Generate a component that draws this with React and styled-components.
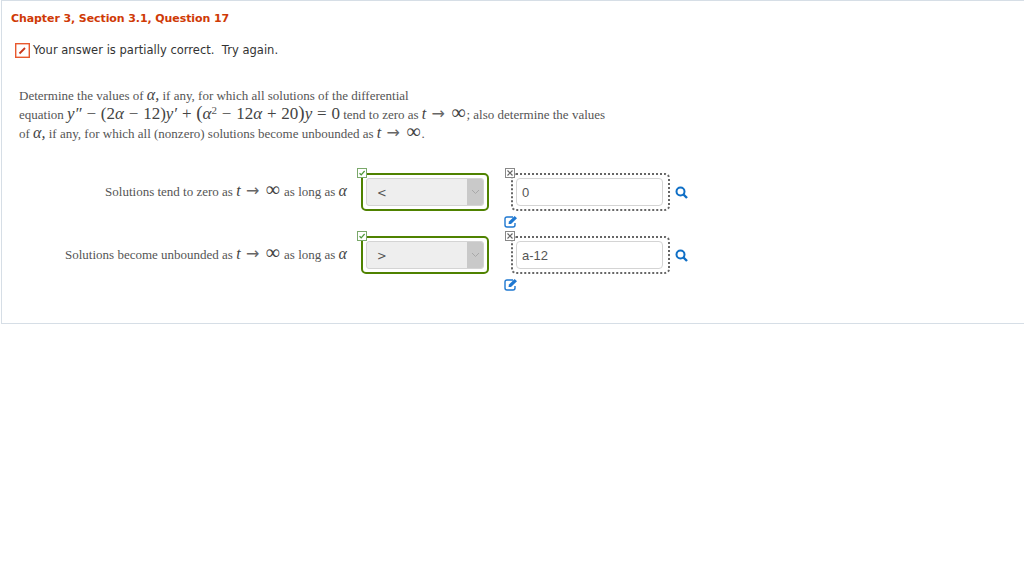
import React from 'react';
import styled, { createGlobalStyle } from 'styled-components';

const GlobalStyle = createGlobalStyle`
  html, body {
    margin: 0;
    padding: 0;
    background: #fff;
    overflow: hidden;
  }
`;

const Panel = styled.div`
  margin-left: 1px;
  height: 311px;
  border: 1px solid #d6dee6;
  border-right: none;
  box-shadow: 0 1px 0 #eef3f8;
  padding: 11px 0 0 9px;
  box-sizing: content-box;
`;

const Heading = styled.h2`
  margin: 0;
  font: bold 11px/14px "DejaVu Sans", Verdana, sans-serif;
  letter-spacing: -0.09px;
  color: #cf3a06;
`;

const Feedback = styled.div`
  display: flex;
  align-items: center;
  gap: 3px;
  margin: 16px 0 0 4px;
  font: 11.5px/16px "DejaVu Sans", Verdana, sans-serif;
  letter-spacing: 0.02px;
  color: #333;
  white-space: pre;
`;

const Question = styled.div`
  margin: 28px 0 0 8px;
  width: 600px;
  font: 13px "Liberation Serif", "Times New Roman", serif;
  color: #555;
  white-space: nowrap;
`;

const Line = styled.div`
  height: 19px;
  line-height: 19px;
`;

const MathVar = styled.span`
  font: italic ${p => p.$size || 16}px/0 "Liberation Serif", serif;
  color: #444;
`;

const MathText = styled.span`
  font: ${p => p.$size || 16}px/0 "Liberation Serif", serif;
  color: #444;
  margin: 0 ${p => p.$gap || 0}px;
`;

const ArrowGlyph = styled.span`
  font: 16px/0 "DejaVu Sans", sans-serif;
  color: #666;
  margin: 0 2px;
`;

const InfinityGlyph = styled.span`
  font: 20px/0 "Liberation Serif", serif;
  color: #444;
  margin: 0 1px;
`;

const Sup = styled.sup`
  font-size: 11px;
  line-height: 0;
`;

const Rows = styled.div`
  display: flex;
  flex-direction: column;
  gap: 25px;
  margin: 30px 0 0 -9px;
`;

const Row = styled.div`
  display: grid;
  grid-template-columns: 345px 143px 196px 18px;
  height: 38px;
  align-items: center;
`;

const Label = styled.div`
  text-align: right;
  font: 13px/16px "Liberation Serif", serif;
  color: #555;
  white-space: nowrap;
`;

const SelectBox = styled.div`
  position: relative;
  margin-left: 14px;
  width: 128px;
  height: 38px;
  box-sizing: border-box;
  border: 2px solid #4f8200;
  border-radius: 5px;
  padding: 3px;
`;

const Select = styled.div`
  display: flex;
  height: 28px;
  box-sizing: border-box;
  border: 1px solid #d4d4d4;
  border-radius: 3px;
  background: #eee;
  overflow: hidden;
`;

const SelectValue = styled.span`
  flex: 1;
  padding-left: 10px;
  font: 11.5px/28px "DejaVu Sans", sans-serif;
  color: #555;
`;

const SelectArrow = styled.span`
  display: flex;
  align-items: center;
  justify-content: center;
  width: 16px;
  background: #c9c9c9;
`;

const Flag = styled.span`
  position: absolute;
  left: ${p => p.$left}px;
  top: -7px;
  display: flex;
  align-items: center;
  justify-content: center;
  width: 10px;
  height: 10px;
  box-sizing: border-box;
  border: 1px solid ${p => p.$color};
  background: #fff;
`;

const InputCell = styled.div`
  margin-left: 21px;
`;

const DottedBox = styled.div`
  position: relative;
  width: 159px;
  height: 38px;
  box-sizing: border-box;
  border: 2px dotted #666;
  border-radius: 5px;
  padding: 3px 5px 3px 3px;
`;

const Input = styled.div`
  height: 28px;
  box-sizing: border-box;
  border: 1px solid #d4d4d4;
  border-radius: 4px;
  padding-left: 5px;
  background: #fff;
  font: 13px/27px "Liberation Sans", Arial, sans-serif;
  color: #555;
`;

const EditMark = styled.span`
  position: absolute;
  left: -9px;
  top: 40px;
  display: block;
  line-height: 0;
`;

const SearchMark = styled.span`
  display: block;
  line-height: 0;
  margin-left: -11px;
`;

const PartialIcon = () => (
  <svg width="15" height="15" viewBox="0 0 15 15">
    <rect x="0.7" y="0.7" width="13.6" height="13.6" fill="#fff" stroke="#e8592e" strokeWidth="1.4" />
    <path d="M4.5 10.5 L10 5" stroke="#c8371a" strokeWidth="1.8" />
  </svg>
);

const CheckIcon = () => (
  <svg width="8" height="8" viewBox="0 0 8 8">
    <path d="M1.5 4.2 L3.2 5.8 L6.6 2" fill="none" stroke="#4f9a3a" strokeWidth="1.2" />
  </svg>
);

const CrossIcon = () => (
  <svg width="8" height="8" viewBox="0 0 8 8">
    <path d="M1.5 1.5 L6.5 6.5 M6.5 1.5 L1.5 6.5" stroke="#666" strokeWidth="1.2" />
  </svg>
);

const ChevronIcon = () => (
  <svg width="9" height="6" viewBox="0 0 9 6">
    <path d="M1 1 L4.5 4.5 L8 1" fill="none" stroke="#a8a8a8" strokeWidth="1" />
  </svg>
);

const EditIcon = () => (
  <svg width="14" height="13" viewBox="0 0 14 13">
    <path d="M9 2 H3 Q1 2 1 4 V10 Q1 12 3 12 H9 Q11 12 11 10 V8" fill="none" stroke="#1f78d1" strokeWidth="1.4" />
    <path d="M4.5 9 L5 6.6 L10.6 1 L13 3.2 L7 9 Z" fill="#1f78d1" />
  </svg>
);

const SearchIcon = () => (
  <svg width="13" height="13" viewBox="0 0 13 13">
    <circle cx="5.5" cy="5.5" r="4" fill="none" stroke="#0f6fc6" strokeWidth="2" />
    <path d="M8.5 8.5 L12 12" stroke="#0f6fc6" strokeWidth="2.4" />
  </svg>
);

const TendsTo = () => (
  <>
    <MathVar>t</MathVar> <ArrowGlyph>→</ArrowGlyph> <InfinityGlyph>∞</InfinityGlyph>
  </>
);

const answers = [
  { prompt: 'Solutions tend to zero as', op: '<', value: '0' },
  { prompt: 'Solutions become unbounded as', op: '>', value: 'a-12' }
];

export default function App() {
  return (
    <>
      <GlobalStyle />
      <Panel>
        <Heading>Chapter 3, Section 3.1, Question 17</Heading>
        <Feedback>
          <PartialIcon />
          <span>Your answer is partially correct.  Try again.</span>
        </Feedback>
        <Question>
          <Line>
            Determine the values of <MathVar>α,</MathVar> if any, for which all solutions of the differential
          </Line>
          <Line>
            equation <MathVar $size={17}>y″</MathVar>
            <MathText $size={17} $gap={4.8}>−</MathText>
            <MathText $size={17}>(2</MathText><MathVar $size={17}>α</MathVar>
            <MathText $size={17} $gap={4.8}>−</MathText>
            <MathText $size={17}>12)</MathText><MathVar $size={17}>y′</MathVar>
            <MathText $size={17} $gap={4.8}>+</MathText>
            <MathText $size={19}>(</MathText><MathVar $size={17}>α</MathVar><Sup>2</Sup>
            <MathText $size={17} $gap={4.8}>−</MathText>
            <MathText $size={17}>12</MathText><MathVar $size={17}>α</MathVar>
            <MathText $size={17} $gap={4.8}>+</MathText>
            <MathText $size={17}>20</MathText><MathText $size={19}>)</MathText><MathVar $size={17}>y</MathVar>
            <MathText $size={17} $gap={4.8}>=</MathText>
            <MathText $size={17}>0</MathText> tend to zero as <TendsTo />; also determine the values
          </Line>
          <Line>
            of <MathVar>α,</MathVar> if any, for which all (nonzero) solutions become unbounded as <TendsTo />.
          </Line>
        </Question>
        <Rows>
          {answers.map(a => (
            <Row key={a.prompt}>
              <Label>
                {a.prompt} <TendsTo /> as long as <MathVar>α</MathVar>
              </Label>
              <SelectBox>
                <Flag $left={-6} $color="#7aa86a"><CheckIcon /></Flag>
                <Select>
                  <SelectValue>{a.op}</SelectValue>
                  <SelectArrow><ChevronIcon /></SelectArrow>
                </Select>
              </SelectBox>
              <InputCell>
                <DottedBox>
                  <Flag $left={-8} $color="#888"><CrossIcon /></Flag>
                  <Input>{a.value}</Input>
                  <EditMark><EditIcon /></EditMark>
                </DottedBox>
              </InputCell>
              <SearchMark><SearchIcon /></SearchMark>
            </Row>
          ))}
        </Rows>
      </Panel>
    </>
  );
}
